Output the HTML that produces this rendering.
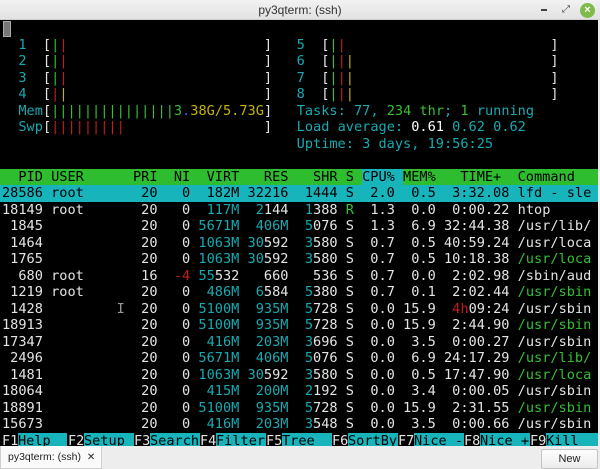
<!DOCTYPE html>
<html><head><meta charset="utf-8"><style>
*{margin:0;padding:0;box-sizing:border-box}
body{width:600px;height:469px;overflow:hidden;background:#ececec;font-family:"Liberation Sans","DejaVu Sans",sans-serif;position:relative}
#title{position:absolute;left:0;top:0;width:600px;height:20px;background:linear-gradient(#f2f2f2,#e2e2e2);border-bottom:1px solid #cfcfcf;text-align:center;font-size:12px;line-height:20px;color:#333}
#term{position:absolute;left:0;top:20px;width:598px;height:426px;background:#000;overflow:hidden}
pre{position:absolute;left:2px;top:0;font-family:"DejaVu Sans Mono","Liberation Mono",monospace;font-size:13.6px;line-height:16.5px;color:#e4e4e4;white-space:pre}
.l{display:block;height:16.5px;width:600px}
.c{color:#17aab2}.g{color:#33c033}.r{color:#c41c1c}.y{color:#c8b400}.b{color:#3355ee}.k{color:#000}
.hd{background:#2ebd2e;color:#000;margin-left:-2px;padding-left:2px}
.sel{background:#17b4bc;color:#000;margin-left:-2px;padding-left:2px}
.cb{background:#17b4bc}
#fbar{position:absolute;left:0;top:412.5px;height:16.5px;width:598px;font-family:"DejaVu Sans Mono","Liberation Mono",monospace;font-size:13.6px;line-height:16.5px}
#fbar span{position:absolute;top:0;height:16.5px;white-space:pre;overflow:hidden}
.fk{color:#e4e4e4}
.fl{background:#17b4bc;color:#000}
#cursor{position:absolute;left:3px;top:1px;width:8px;height:16px;border:1px solid #aaa;background:#777}
#tabbar{position:absolute;left:0;top:446px;width:600px;height:23px;background:#ededed}
#tab{position:absolute;left:0;top:0;width:102px;height:23px;background:#fafafa;border:1px solid #cfcfcf;border-top:none;font-size:10.5px;line-height:22px;padding-left:7px;color:#222;white-space:nowrap}
#new{position:absolute;left:541px;top:3px;width:57px;height:20px;background:linear-gradient(#fdfdfd,#ececec);border:1px solid #c4c4c4;border-radius:2px;font-size:11px;text-align:center;line-height:18px;color:#222}
</style></head><body>
<div id="title">py3qterm: (ssh)
<span style="position:absolute;left:541px;top:9px;width:6px;height:2px;background:#444"></span>
<span style="position:absolute;left:562px;top:5px;font-size:10px;line-height:10px;color:#444">⤢</span>
<span style="position:absolute;left:580px;top:3px;width:15px;height:15px;border-radius:50%;background:#7fba4a;color:#fff;font-size:11px;line-height:15px;text-align:center;font-weight:bold">×</span>
</div>
<div id="term">
<div id="cursor"></div>
<pre><span class="l"> </span><span class="l">  <span class="c">1</span>  [<span class="g">|</span><span class="r">|</span>                        ]   <span class="c">5</span>  [<span class="g">|</span><span class="r">|</span>                         ]</span><span class="l">  <span class="c">2</span>  [<span class="g">|</span><span class="r">|</span>                        ]   <span class="c">6</span>  [<span class="g">|</span><span class="r">|</span><span class="y">|</span>                        ]</span><span class="l">  <span class="c">3</span>  [<span class="g">|</span><span class="r">|</span>                        ]   <span class="c">7</span>  [<span class="g">|</span><span class="r">|</span><span class="y">|</span>                        ]</span><span class="l">  <span class="c">4</span>  [<span class="r">|</span><span class="y">|</span>                        ]   <span class="c">8</span>  [<span class="g">|</span><span class="r">|</span><span class="y">|</span>                        ]</span><span class="l">  <span class="c">Mem</span>[<span class="g">|||||||||||||||3</span><span class="b">.</span><span class="y">38G/5.73G</span>]   <span class="c">Tasks: 77, </span><span class="g">234 thr</span><span class="c">; </span><span class="g">1</span><span class="c"> running</span></span><span class="l">  <span class="c">Swp</span>[<span class="r">|||||||||</span>                 ]   <span class="c">Load average: </span><span style="color:#fff">0.61 </span><span class="c">0.62 0.62</span></span><span class="l">                                    <span class="c">Uptime: 3 days, 19:56:25</span></span><span class="l"> </span><span class="l hd">  PID USER      PRI  NI  VIRT   RES   SHR S <span class="cb">CPU% </span>MEM%   TIME+  Command    </span><span class="l sel">28586 root       20   0  182M 32216  1444 S  2.0  0.5  3:32.08 lfd - sle </span><span class="l">18149 root       20   0  <span class="c">117M</span>  <span class="c">2</span>144  <span class="c">1</span>388 <span class="g">R</span>  1.3  0.0  0:00.22 htop</span><span class="l"> 1845            20   0 <span class="c">5671M</span>  <span class="c">406M</span>  <span class="c">5</span>076 S  1.3  6.9 32:44.38 /usr/lib/</span><span class="l"> 1464            20   0 <span class="c">1063M</span> <span class="c">30</span>592  <span class="c">3</span>580 S  0.7  0.5 40:59.24 /usr/loca</span><span class="l"> 1765            20   0 <span class="c">1063M</span> <span class="c">30</span>592  <span class="c">3</span>580 S  0.7  0.5 10:18.38 <span class="g">/usr/loca</span></span><span class="l">  680 root       16  <span class="r">-4</span> <span class="c">55</span>532   660   536 S  0.7  0.0  2:02.98 /sbin/aud</span><span class="l"> 1219 root       20   0  <span class="c">486M</span>  <span class="c">6</span>584  <span class="c">5</span>380 S  0.7  0.1  2:02.44 <span class="g">/usr/sbin</span></span><span class="l"> 1428         <span style="color:#999">I</span>  20   0 <span class="c">5100M</span>  <span class="c">935M</span>  <span class="c">5</span>728 S  0.0 15.9 <span class="r"> 4h</span>09:24 /usr/sbin</span><span class="l">18913            20   0 <span class="c">5100M</span>  <span class="c">935M</span>  <span class="c">5</span>728 S  0.0 15.9  2:44.90 <span class="g">/usr/sbin</span></span><span class="l">17347            20   0  <span class="c">416M</span>  <span class="c">203M</span>  <span class="c">3</span>696 S  0.0  3.5  0:00.27 /usr/sbin</span><span class="l"> 2496            20   0 <span class="c">5671M</span>  <span class="c">406M</span>  <span class="c">5</span>076 S  0.0  6.9 24:17.29 <span class="g">/usr/lib/</span></span><span class="l"> 1481            20   0 <span class="c">1063M</span> <span class="c">30</span>592  <span class="c">3</span>580 S  0.0  0.5 17:47.90 <span class="g">/usr/loca</span></span><span class="l">18064            20   0  <span class="c">415M</span>  <span class="c">200M</span>  <span class="c">2</span>192 S  0.0  3.4  0:00.05 /usr/sbin</span><span class="l">18891            20   0 <span class="c">5100M</span>  <span class="c">935M</span>  <span class="c">5</span>728 S  0.0 15.9  2:31.55 <span class="g">/usr/sbin</span></span><span class="l">15673            20   0  <span class="c">416M</span>  <span class="c">203M</span>  <span class="c">3</span>548 S  0.0  3.5  0:00.66 /usr/sbin</span></pre>
<div id="fbar">
<span class="fk" style="left:2px">F1</span><span class="fl" style="left:18px;width:49px">Help  </span>
<span class="fk" style="left:68px">F2</span><span class="fl" style="left:84px;width:50px">Setup </span>
<span class="fk" style="left:134px">F3</span><span class="fl" style="left:150px;width:50px">Search</span>
<span class="fk" style="left:200px">F4</span><span class="fl" style="left:216px;width:50px">Filter</span>
<span class="fk" style="left:266px">F5</span><span class="fl" style="left:282px;width:50px">Tree  </span>
<span class="fk" style="left:332px">F6</span><span class="fl" style="left:348px;width:50px">SortBy</span>
<span class="fk" style="left:398px">F7</span><span class="fl" style="left:414px;width:50px">Nice -</span>
<span class="fk" style="left:464px">F8</span><span class="fl" style="left:480px;width:50px">Nice +</span>
<span class="fk" style="left:530px">F9</span><span class="fl" style="left:546px;width:52px">Kill  </span>
</div>
</div>
<div id="tabbar">
<div id="tab">py3qterm: (ssh) <span style="margin-left:3px;font-size:10px">✕</span></div>
<div id="new">New</div>
</div>
</body></html>
